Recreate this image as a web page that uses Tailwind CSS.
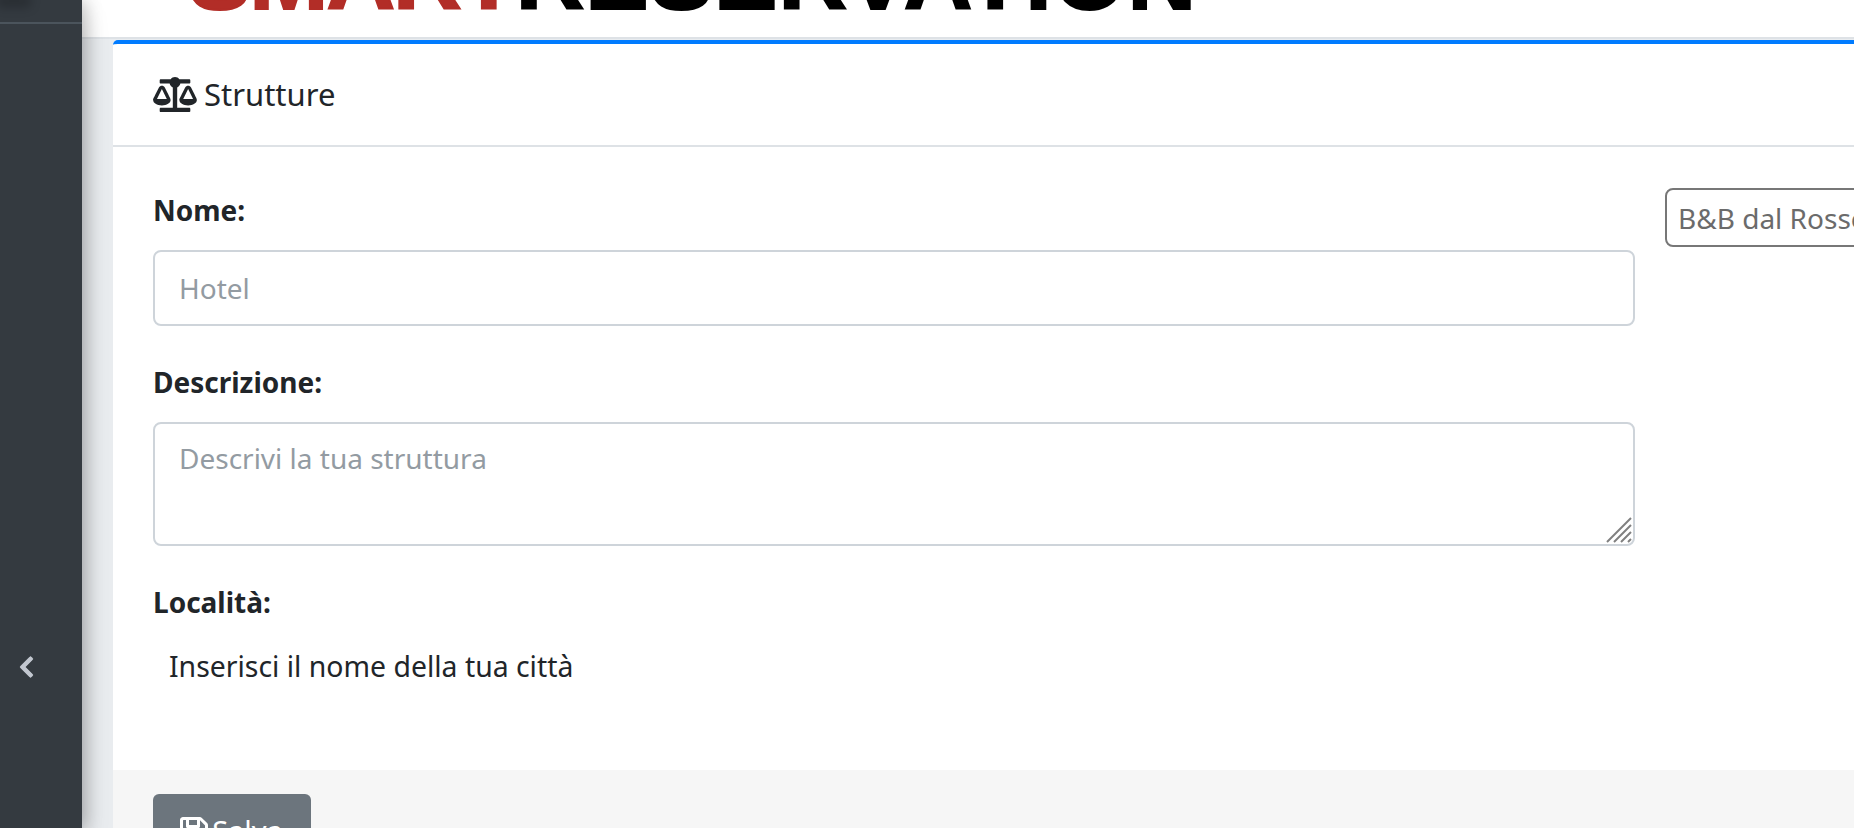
<!doctype html>
<html lang="it">
<head>
<meta charset="utf-8">
<title>Strutture</title>
<script src="https://cdn.jsdelivr.net/npm/@tailwindcss/browser@4"></script>
</head>
<body class="h-screen overflow-hidden bg-[#e9ecef] font-['Noto_Sans',sans-serif] text-[#212529]">
<div class="flex h-[828px] w-[1854px] overflow-hidden">
  <aside class="relative z-10 flex h-full w-[82px] shrink-0 flex-col overflow-visible bg-[#343a40] shadow-[4px_0_16px_rgba(0,0,0,0.2),0_14px_28px_rgba(0,0,0,0.18)]">
    <div class="absolute top-[-6px] left-[-4px] h-[14px] w-[36px] rounded-full bg-black/20 blur-[5px]"></div>
    <div class="mt-[22px] h-[2px] bg-[#4b545c]"></div>
    <div class="mt-[631px] pl-[19px] text-[#c2c7d0]">
      <svg viewBox="0 0 320 512" class="h-[24px] w-[15px] fill-current stroke-current stroke-[20]"><path d="M34.52 239.03L228.87 44.69c9.37-9.37 24.57-9.37 33.94 0l22.67 22.67c9.36 9.36 9.37 24.52.04 33.9L131.49 256l154.02 154.75c9.34 9.38 9.32 24.54-.04 33.9l-22.67 22.67c-9.37 9.37-24.57 9.37-33.94 0L34.52 272.97c-9.37-9.37-9.37-24.57 0-33.94z"/></svg>
    </div>
  </aside>
  <main class="flex min-w-0 flex-1 flex-col">
    <header class="h-[39px] shrink-0 overflow-hidden border-b-2 border-[#dee2e6] bg-white pl-[106px]">
      <div class="-mt-[71px] whitespace-nowrap font-['Liberation_Sans',sans-serif] text-[95px] leading-[95px] font-bold [-webkit-text-stroke:2px_currentColor]">
        <span class="tracking-[-2px] text-[#b22d27]">SMART</span><span class="tracking-[1px] text-black">RESERVATION</span>
      </div>
    </header>
    <div class="flex-1 pl-[31px] pt-[1px]">
      <section class="flex h-[788px] w-[1760px] flex-col rounded-tl-[5px] border-t-4 border-[#007bff] bg-white">
        <div class="flex h-[103px] shrink-0 items-center gap-[7px] border-b-2 border-[#dee2e6] pl-[40px] text-[31px]">
          <svg viewBox="0 0 640 512" class="h-[35px] w-[44px] fill-[#212529]"><path d="M256 336h-.02c0-16.18 1.34-8.73-85.05-181.51-17.65-35.29-68.19-35.36-85.87 0C-2.06 328.75.02 320.33.02 336H0c0 44.18 57.31 80 128 80s128-35.82 128-80zM128 176l72 144H56l72-144zm511.98 160c0-16.18 1.34-8.73-85.05-181.51-17.65-35.29-68.19-35.36-85.87 0-87.12 174.26-85.04 165.84-85.04 181.51H384c0 44.18 57.31 80 128 80s128-35.82 128-80h-.02zM440 320l72-144 72 144H440zm88 128H352V153.25c23.51-10.29 41.16-31.48 46.39-57.25H528c8.84 0 16-7.16 16-16V48c0-8.84-7.16-16-16-16H383.64C369.04 12.68 346.09 0 320 0s-49.04 12.68-63.64 32H112c-8.84 0-16 7.16-16 16v32c0 8.84 7.16 16 16 16h129.61c5.23 25.76 22.87 46.96 46.39 57.25V448H112c-8.84 0-16 7.16-16 16v32c0 8.84 7.16 16 16 16h416c8.84 0 16-7.16 16-16v-32c0-8.84-7.16-16-16-16z"/></svg>
          <span>Strutture</span>
        </div>
        <div class="grid h-[623px] shrink-0 grid-cols-[1482px_1fr] gap-[30px] pl-[40px] pt-[39px]">
          <form class="flex flex-col">
            <label class="mb-[16px] block h-[48px] text-[28px] leading-[48px] font-bold">Nome:</label>
            <input type="text" placeholder="Hotel" class="block h-[76px] w-full rounded-[8px] border-2 border-[#ced4da] bg-white px-[24px] text-[28px] placeholder:text-[#939ba2]">
            <label class="mt-[32px] mb-[16px] block h-[48px] text-[28px] leading-[48px] font-bold">Descrizione:</label>
            <div class="relative h-[124px]">
              <textarea placeholder="Descrivi la tua struttura" class="block h-full w-full resize-none rounded-[8px] border-2 border-[#ced4da] bg-white px-[24px] py-[15px] text-[28px] leading-[38px] placeholder:text-[#939ba2]"></textarea>
              <svg viewBox="0 0 26 26" class="absolute right-[3px] bottom-[3px] h-[26px] w-[26px] stroke-[#808080] stroke-2"><path d="M1 25 25 1M8 25 25 8M15 25 25 15M22 25 25 22"/></svg>
            </div>
            <label class="mt-[32px] mb-[16px] block h-[48px] text-[28px] leading-[48px] font-bold">Località:</label>
            <div class="h-[48px] pl-[16px] text-[28.4px] leading-[48px]">Inserisci il nome della tua città</div>
          </form>
          <div>
            <div class="mt-[2px] flex h-[59px] w-[300px] items-center rounded-[8px] border-2 border-[#777777] pl-[11px] text-[28px] whitespace-nowrap text-[#6b6b6b]">B&amp;B dal Rosso</div>
          </div>
        </div>
        <div class="flex-1 bg-[#f6f6f6] pl-[40px] pt-[24px]">
          <button type="button" class="flex h-[70px] w-[158px] items-start justify-center gap-[4px] rounded-[6px] bg-[#6c757d] pt-[21px] pr-[1px] text-[29px] leading-[38px] text-white">
            <svg viewBox="0 0 448 512" class="h-[32px] w-[28px] shrink-0 fill-current"><path d="M433.941 129.941l-83.882-83.882A48 48 0 0 0 316.118 32H48C21.49 32 0 53.49 0 80v352c0 26.51 21.49 48 48 48h352c26.51 0 48-21.49 48-48V163.882a48 48 0 0 0-14.059-33.941zM272 80v80H144V80h128zm122 352H54a6 6 0 0 1-6-6V86a6 6 0 0 1 6-6h42v104c0 13.255 10.745 24 24 24h176c13.255 0 24-10.745 24-24V83.882l78.243 78.243a6 6 0 0 1 1.757 4.243V426a6 6 0 0 1-6 6zM224 232c-48.523 0-88 39.477-88 88s39.477 88 88 88 88-39.477 88-88-39.477-88-88-88zm0 128c-22.056 0-40-17.944-40-40s17.944-40 40-40 40 17.944 40 40-17.944 40-40 40z"/></svg>
            <span class="-mt-[3px]">Salva</span>
          </button>
        </div>
      </section>
    </div>
  </main>
</div>
</body>
</html>
